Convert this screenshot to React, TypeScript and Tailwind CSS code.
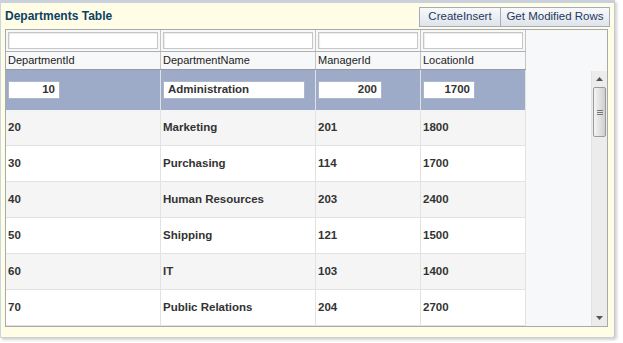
const rows = [
  { id: "20", name: "Marketing", mgr: "201", loc: "1800" },
  { id: "30", name: "Purchasing", mgr: "114", loc: "1700" },
  { id: "40", name: "Human Resources", mgr: "203", loc: "2400" },
  { id: "50", name: "Shipping", mgr: "121", loc: "1500" },
  { id: "60", name: "IT", mgr: "103", loc: "1400" },
  { id: "70", name: "Public Relations", mgr: "204", loc: "2700" },
];

const cols = ["w-[155px]", "w-[155px]", "w-[105px]", "w-[105px]"];
const headers = ["DepartmentId", "DepartmentName", "ManagerId", "LocationId"];

function Cell({ className, children }: { className: string; children?: React.ReactNode }) {
  return <div className={`${className} shrink-0 border-r border-[#e2e2e2] flex items-center`}>{children}</div>;
}

export default function App() {
  return (
    <div className="w-[623px] h-[343px] bg-white font-['Liberation_Sans',Arial,sans-serif]">
      <div className="w-[615px] h-[338px] bg-[#fffde6] border-t-[3px] border-l border-r border-b border-t-[#c9d1dd] border-l-[#c9d6e4] border-r-[#c8c8c8] border-b-[#cfcfcf] rounded-br-[3px] shadow-[2px_2px_3px_rgba(0,0,0,0.18)] px-[4px] flex flex-col">
        <div className="h-[26px] flex items-center justify-between">
          <div className="text-[12px] font-bold text-[#0b4263]">Departments Table</div>
          <div className="flex h-[20px] mt-[1px] border border-[#a4adb9] bg-gradient-to-b from-[#f8f9fb] to-[#dfe4eb] text-[11.5px] text-[#1f3a5c]">
            <div className="w-[81px] flex items-center justify-center border-r border-[#a4adb9]">CreateInsert</div>
            <div className="w-[108px] flex items-center justify-center">Get Modified Rows</div>
          </div>
        </div>
        <div className="w-[603px] h-[298px] border border-[#a9a9a9] flex bg-[#f7f8fa] overflow-hidden">
          <div className="flex flex-col w-[520px] shrink-0">
            <div className="flex h-[23px] border-b border-[#b0b0b0] bg-[#f7f8fa]">
              {cols.map((c, i) => (
                <div key={i} className={`${c} shrink-0 border-r border-[#c4c4c4] flex items-center px-[2px]`}>
                  <div className="w-full h-[17px] bg-white border border-[#c6c6c6] shadow-[inset_1px_1px_1px_rgba(0,0,0,0.08)]" />
                </div>
              ))}
            </div>
            <div className="flex h-[18px] border-b border-[#9a9a9a] bg-[#f7f8fa] text-[11px] text-[#222]">
              {cols.map((c, i) => (
                <div key={i} className={`${c} shrink-0 border-r border-[#c4c4c4] flex items-center pl-[2px]`}>
                  {headers[i]}
                </div>
              ))}
            </div>
            <div className="flex h-[40px] shrink-0 bg-[#9eabc8] text-[11.5px] font-bold text-[#333]">
              <Cell className={`${cols[0]} border-[#b8c2d6] pl-[2px]`}>
                <div className="w-[52px] h-[18px] bg-white border border-[#aeb7c8] flex items-center justify-end pr-[4px]">10</div>
              </Cell>
              <Cell className={`${cols[1]} border-[#b8c2d6] pl-[2px]`}>
                <div className="w-[142px] h-[18px] bg-white border border-[#aeb7c8] flex items-center pl-[4px]">Administration</div>
              </Cell>
              <Cell className={`${cols[2]} border-[#b8c2d6] pl-[2px]`}>
                <div className="w-[64px] h-[18px] bg-white border border-[#aeb7c8] flex items-center justify-end pr-[4px]">200</div>
              </Cell>
              <Cell className={`${cols[3]} border-[#b8c2d6] pl-[2px]`}>
                <div className="w-[52px] h-[18px] bg-white border border-[#aeb7c8] flex items-center justify-end pr-[4px]">1700</div>
              </Cell>
            </div>
            {rows.map((r, i) => (
              <div
                key={r.id}
                className={`flex h-[36px] shrink-0 border-b border-[#e2e2e2] text-[11.5px] font-bold text-[#333] ${i % 2 === 0 ? "bg-[#f5f5f5]" : "bg-white"}`}
              >
                <Cell className={`${cols[0]} pl-[2px]`}>{r.id}</Cell>
                <Cell className={`${cols[1]} pl-[2px]`}>{r.name}</Cell>
                <Cell className={`${cols[2]} pl-[2px]`}>{r.mgr}</Cell>
                <Cell className={`${cols[3]} pl-[2px]`}>{r.loc}</Cell>
              </div>
            ))}
          </div>
          <div className="flex-1" />
          <div className="w-[16px] shrink-0 flex flex-col mt-[41px] bg-[#ececec] border-l border-[#e2e2e2]">
            <div className="h-[16px] flex items-center justify-center">
              <svg width="7" height="4" viewBox="0 0 7 4"><path d="M0 4 L3.5 0 L7 4 Z" fill="#555" /></svg>
            </div>
            <div className="mx-[1px] h-[50px] rounded-[2px] border border-[#9a9a9a] bg-gradient-to-r from-[#f4f4f4] via-[#e2e2e2] to-[#cfcfcf] flex flex-col items-center justify-center gap-[1px]">
              <div className="w-[6px] h-px bg-[#777]" />
              <div className="w-[6px] h-px bg-[#777]" />
              <div className="w-[6px] h-px bg-[#777]" />
            </div>
            <div className="flex-1" />
            <div className="h-[16px] flex items-center justify-center">
              <svg width="7" height="4" viewBox="0 0 7 4"><path d="M0 0 L7 0 L3.5 4 Z" fill="#555" /></svg>
            </div>
          </div>
        </div>
      </div>
    </div>
  );
}
